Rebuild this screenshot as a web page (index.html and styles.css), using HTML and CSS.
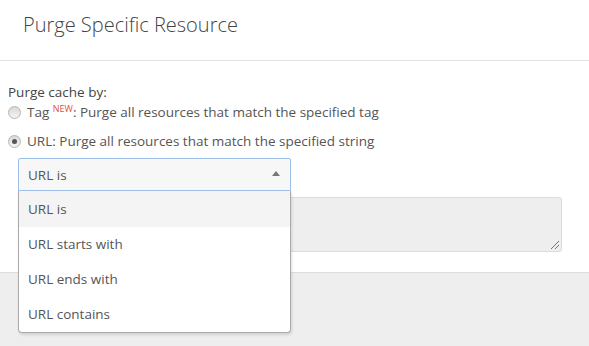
FILE: index.html
```html
<!DOCTYPE html>
<html>
<head>
<meta charset="utf-8">
<link rel="stylesheet" href="styles.css">
</head>
<body>
<div class="modal">
  <div class="header"><h1 class="title">Purge Specific Resource</h1></div>
  <div class="content">
    <div class="label">Purge cache by:</div>
    <label class="option opt-tag"><span class="radio"></span><span>Tag <sup class="new">NEW</sup>: Purge all resources that match the specified tag</span></label>
    <label class="option opt-url"><span class="radio checked"></span><span>URL: Purge all resources that match the specified string</span></label>
    <div class="sub">
      <div class="select-wrap">
        <div class="select"><span>URL is</span><span class="arrow"></span></div>
        <ul class="dropdown">
          <li class="active">URL is</li>
          <li>URL starts with</li>
          <li>URL ends with</li>
          <li>URL contains</li>
        </ul>
      </div>
      <div class="textarea"><span class="grip"></span></div>
    </div>
  </div>
  <div class="footer"></div>
</div>
</body>
</html>
```
FILE: styles.css
```css
html, body { margin: 0; padding: 0; background: #fff; }
body { font-family: "Open Sans", "Liberation Sans", sans-serif; font-size: 13.5px; color: #555; }
.modal { width: 589px; height: 346px; display: flex; flex-direction: column; overflow: hidden; }
.header { height: 61px; border-bottom: 1px solid #e3e3e3; box-sizing: border-box; padding: 10px 23px 0; }
.title { margin: 0; font-size: 20px; font-weight: 300; color: #444; line-height: 30px; }
.content { padding: 23px 8px 0; height: 211px; box-sizing: border-box; }
.label { line-height: 16px; color: #444; }
.option { display: flex; align-items: center; gap: 6px; color: #555; line-height: 18px; }
.opt-tag { margin-top: 3px; }
.opt-url { margin-top: 11px; }
.radio { width: 11px; height: 11px; border-radius: 50%; border: 1px solid #b5b5b5; background: linear-gradient(#d8d8d8, #f4f4f4); box-sizing: content-box; position: relative; flex: none; }
.radio.checked::after { content: ""; position: absolute; left: 3px; top: 3px; width: 5px; height: 5px; border-radius: 50%; background: #555; }
.new { color: #e2513b; font-size: 9px; vertical-align: top; position: relative; top: -3px; }
.sub { margin: 8px 0 0 10px; width: 544px; }
.select-wrap { position: relative; width: 273px; }
.select { height: 33px; box-sizing: border-box; border: 1px solid #9ebfe8; border-radius: 2px 2px 0 0; background: #f7f7f7; display: flex; align-items: center; justify-content: space-between; padding: 0 9px 0 9px; color: #555; }
.arrow { width: 0; height: 0; border-left: 4px solid transparent; border-right: 4px solid transparent; border-bottom: 5px solid #777; margin-right: 1px; margin-top: -2px; }
.dropdown { position: absolute; left: 0; top: 33px; width: 273px; box-sizing: border-box; margin: 0; padding: 0; list-style: none; background: #fff; border: 1px solid #aaa; border-top: none; border-radius: 0 0 4px 4px; box-shadow: 1px 2px 3px rgba(0,0,0,0.12); z-index: 2; }
.dropdown li { height: 35px; line-height: 35px; padding-left: 9px; color: #555; }
.dropdown li.active { background: #f4f4f4; height: 36px; line-height: 36px; }
.textarea { margin-top: 6px; height: 55px; box-sizing: border-box; border: 1px solid #dcdcdc; border-radius: 3px; background: #eee; position: relative; }
.grip { position: absolute; right: 2px; bottom: 2px; width: 8px; height: 8px; background: linear-gradient(135deg, transparent 45%, #777 45%, #777 52%, transparent 52%, transparent 70%, #777 70%, #777 77%, transparent 77%); }
.footer { flex: 1; background: #eee; border-top: 1px solid #ddd; }
```
